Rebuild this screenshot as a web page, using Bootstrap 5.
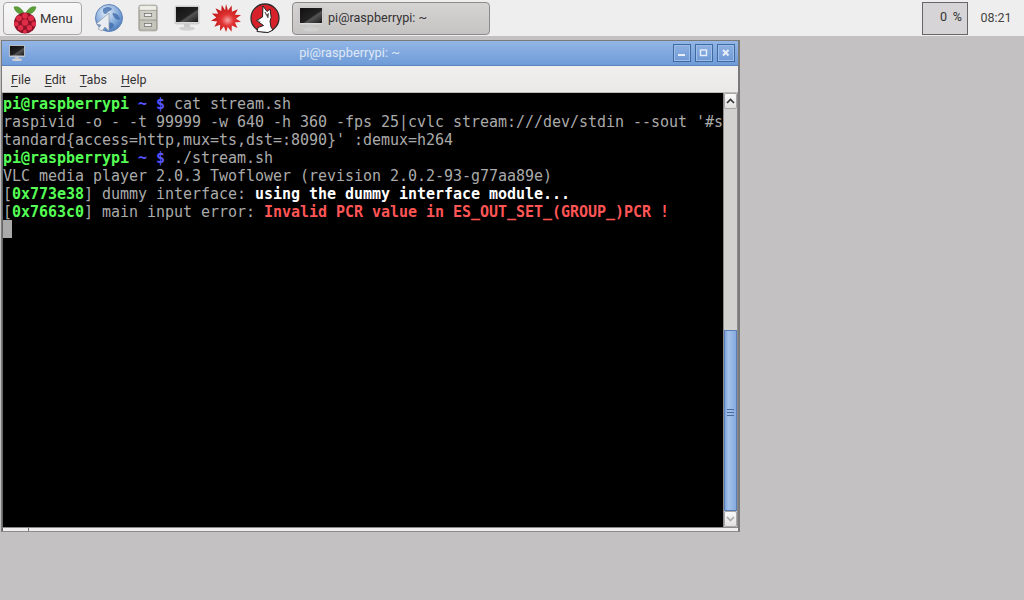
<!DOCTYPE html>
<html lang="en">
<head>
<meta charset="utf-8">
<title>pi@raspberrypi: ~</title>
<link href="https://cdn.jsdelivr.net/npm/bootstrap@5.3.0/dist/css/bootstrap.min.css" rel="stylesheet">
<style>
html,body{height:600px;overflow:hidden}
body{background:#c3c1c1;font-family:Roboto,"Liberation Sans",sans-serif;font-size:12.5px;color:#333}
.panel{height:36px;background:#efeeee;padding:2px 0 0 3px}
.menu-btn{width:79px;height:33px;border:1px solid #a8a5a5;border-radius:4px;background:linear-gradient(#f8f7f7,#eeecec);font-size:13px;color:#333;padding:0 0 0 9px;gap:3px}
.launch{width:39px;height:32px}
.launch-row{margin-left:7px}
.task-btn{width:198px;height:33px;margin-left:8px;border:1px solid #8c8a8a;border-radius:4px;background:linear-gradient(#d6d3d3,#c6c3c3);font-size:12.6px;padding-left:5px;gap:4px;color:#333}
.cpu-box{width:46px;height:33px;border:1px solid #666;background:#d6d4d6;font-size:12.5px;text-align:right;padding:5px 5px 0 0;word-spacing:2px;letter-spacing:.2px;color:#333}
.clock{width:56px;text-align:center;font-size:12.5px;color:#444}
.term-win{width:739px;height:492px;margin:4px 0 0 1px;background:#efecec;border:1px solid #7a7a7a;border-right-width:2px;border-bottom-color:#8a8a8a}
.title-bar{height:25px;background:linear-gradient(#93b6e6,#6f9bd8);border-bottom:1px solid #5d84bd;padding:0 3px 0 6px;color:#dfe8f6;font-size:12.8px}
.title-text{flex:1;text-align:center;padding-left:4px}
.wm-btn{width:18px;height:18px;border:1px solid #3f6a9f;background:linear-gradient(#8db0e2,#6f9ad6);margin-left:4px;box-shadow:inset 0 0 0 1px #9dbce8}
.menu-row{height:27px;background:linear-gradient(#f1eeee,#ebe8e8);padding:2px 0 0 9px;gap:14px;font-size:12.5px;color:#333;border-bottom:1px solid #bdbaba}
.menu-row u{text-underline-offset:2px}
.term-body{height:435px;border-left:1px solid #666}
.term-screen{flex:1;background:#000;color:#aaa;padding:2px 0 0 0;font:15px/18px "DejaVu Sans Mono",monospace;letter-spacing:-.03px;white-space:pre;overflow:hidden}
.t-g{color:#55ff55;font-weight:700}
.t-b{color:#5555ff;font-weight:700}
.t-gn{color:#55ff55;font-weight:700}
.t-w{color:#fff;font-weight:700}
.t-r{color:#ff5555;font-weight:700}
.t-cur{display:block;width:9px;height:18px;margin-top:-1px;background:#aaa}
.sbar{width:15px;background:#d3d0d0;border-left:1px solid #8e8c8c;border-right:1px solid #8e8c8c}
.s-arrow{height:16px;background:linear-gradient(#fbfafa,#e2e0e0);border:1px solid #a9a7a7;border-radius:2px}
.s-space{height:221px}
.s-thumb{flex:1;background:linear-gradient(90deg,#7ea4da,#a5c2ea 30%,#85aade);border:1px solid #5a7fb6;padding-bottom:97px}
.grip{width:7px;height:1px;background:#4b6a9c;box-shadow:0 3px #4b6a9c,0 -3px #4b6a9c}
.foot-row{height:4px;background:#f0eeee;border-top:1px solid #8a8a8a;border-left:1px solid #666}
.foot-cell{width:26px;border-right:1px solid #777}
</style>
</head>
<body>
<div class="panel d-flex align-items-start">
  <button class="menu-btn d-flex align-items-center" type="button">
    <svg width="24" height="30" viewBox="0 0 24 30"><path d="M11 9C8 3 4 2 1 3c1 5 5 8 10 6zM13 9c3-6 7-7 10-6-1 5-5 8-10 6z" fill="#5c9e38" stroke="#3f7a26" stroke-width=".5"/><ellipse cx="12" cy="19" rx="11" ry="10.500" fill="#8c1328"/><g fill="#e02c46"><circle cx="12" cy="11.800" r="2.900"/><circle cx="6" cy="14.300" r="2.900"/><circle cx="18" cy="14.300" r="2.900"/><circle cx="3.300" cy="20" r="2.400"/><circle cx="20.700" cy="20" r="2.400"/><circle cx="12" cy="18.500" r="3.200"/><circle cx="7.600" cy="23.800" r="2.700"/><circle cx="16.400" cy="23.800" r="2.700"/><circle cx="12" cy="27.400" r="1.900"/></g></svg>
    <span>Menu</span>
  </button>
  <div class="launch-row d-flex">
    <div class="launch d-flex justify-content-center align-items-center">
      <svg width="30" height="30" viewBox="0 0 30 30"><defs><radialGradient id="gl" cx=".4" cy=".3" r=".8"><stop offset="0" stop-color="#e6eff9"/><stop offset=".6" stop-color="#7da5d8"/><stop offset="1" stop-color="#3f6fb0"/></radialGradient></defs><circle cx="15" cy="15" r="13.500" fill="url(#gl)" stroke="#5f84b8"/><path d="M9 6c4-3 8-2 9 0-1 2-4 2-5 4s-3 1-4-1zM19 10c3 0 6 2 7 6-2 2-5 0-6-2s-2-3-1-4zM14 20c3-1 5 0 6 2-1 3-3 4-4 4-1-2-3-3-2-6z" fill="#3c6aa8" opacity=".75"/><path d="M15 10v18l-4-4-3 4-4-2 3-4-5-1z" fill="#e9edf2" stroke="#8b97a5" stroke-width=".7"/></svg>
    </div>
    <div class="launch d-flex justify-content-center align-items-center">
      <svg width="22" height="30" viewBox="0 0 24 30"><defs><linearGradient id="cb" x1="0" x2="1"><stop offset="0" stop-color="#b7b7ae"/><stop offset=".5" stop-color="#dadad3"/><stop offset="1" stop-color="#a5a59c"/></linearGradient></defs><rect x="2" y="1" width="20" height="28" rx="2" fill="url(#cb)" stroke="#a3a39a"/><rect x="3" y="2" width="18" height="4" fill="#eeeee9"/><rect x="3" y="7" width="18" height="10" fill="#cfcfc7" stroke="#999990" stroke-width=".6"/><rect x="3" y="18" width="18" height="10" fill="#c5c5bc" stroke="#999990" stroke-width=".6"/><rect x="8" y="10" width="8" height="3.400" fill="#eee" stroke="#6f6f69" stroke-width=".8"/><rect x="8" y="21" width="8" height="3.400" fill="#eee" stroke="#6f6f69" stroke-width=".8"/></svg>
    </div>
    <div class="launch d-flex justify-content-center align-items-center">
      <svg width="26" height="28" viewBox="0 0 26 28"><use href="#mon"/></svg>
    </div>
    <div class="launch d-flex justify-content-center align-items-center">
      <svg width="30" height="30" viewBox="0 0 30 30"><defs><radialGradient id="st" cx=".55" cy=".58" r=".5"><stop offset="0" stop-color="#f7a5a5"/><stop offset=".4" stop-color="#e23434"/><stop offset="1" stop-color="#c01818"/></radialGradient></defs><path d="M15 1l2 6.500 3.600-5 .3 6.300 6-2.600-3 5.500 6.100.3-5.100 3.800 5.300 3-6.300.6 2.600 5.600-5.700-2.500-.2 6.200-3.800-4.800L15 29l-2.100-5.600-3.900 4.500.1-6.100-5.700 2 2.800-5.300-6.200-.7 5.300-3.300L.9 10.400l6.300.4-2.700-5.500 5.700 2.700.6-6 3.300 5.200z" fill="url(#st)"/></svg>
    </div>
    <div class="launch d-flex justify-content-center align-items-center">
      <svg width="30" height="30" viewBox="0 0 30 30"><circle cx="15" cy="15" r="14" fill="#d8222b" stroke="#2c2c2c" stroke-width="1.300"/><path d="M7 28.500l1-4 5.500-2-7-5 6-3.500L13 3l4 5.500L20 6l1.200 8.500L20 18l1 6 2 3-5 2.500z" fill="#fff" stroke="#222" stroke-width="1"/><path d="M15 9l1.500 3 2-1.500-.5 4.500zM7.500 17.500l3 1" fill="#555" stroke="#444" stroke-width=".7"/></svg>
    </div>
  </div>
  <div class="task-btn d-flex align-items-center">
    <svg width="26" height="28" viewBox="0 0 26 28"><use href="#mon"/></svg>
    <span>pi@raspberrypi: ~</span>
  </div>
  <div class="ms-auto d-flex align-items-center">
    <div class="cpu-box">0 %</div>
    <div class="clock">08:21</div>
  </div>
</div>

<div class="term-win d-flex flex-column">
  <div class="title-bar d-flex align-items-center">
    <svg width="18" height="18" viewBox="0 0 26 28"><use href="#mon"/></svg>
    <span class="title-text">pi@raspberrypi: ~</span>
    <span class="wm-btn d-flex justify-content-center align-items-center"><svg width="10" height="10" viewBox="0 0 10 10"><rect x="1" y="6" width="7" height="2" fill="#e8eef8"/></svg></span>
    <span class="wm-btn d-flex justify-content-center align-items-center"><svg width="10" height="10" viewBox="0 0 10 10"><rect x="1.500" y="2" width="6" height="5.500" fill="none" stroke="#e8eef8" stroke-width="1.400"/></svg></span>
    <span class="wm-btn d-flex justify-content-center align-items-center"><svg width="10" height="10" viewBox="0 0 10 10"><path d="M2 2l5.500 5.500M7.500 2L2 7.500" stroke="#e8eef8" stroke-width="2"/></svg></span>
  </div>
  <div class="menu-row d-flex align-items-center">
    <span><u>F</u>ile</span><span><u>E</u>dit</span><span><u>T</u>abs</span><span><u>H</u>elp</span>
  </div>
  <div class="term-body d-flex">
    <div class="term-screen"><span class="t-g">pi@raspberrypi</span> <span class="t-b">~ $</span> cat stream.sh
raspivid -o - -t 99999 -w 640 -h 360 -fps 25|cvlc stream:///dev/stdin --sout '#s
tandard{access=http,mux=ts,dst=:8090}' :demux=h264
<span class="t-g">pi@raspberrypi</span> <span class="t-b">~ $</span> ./stream.sh
VLC media player 2.0.3 Twoflower (revision 2.0.2-93-g77aa89e)
[<span class="t-gn">0x773e38</span>] dummy interface: <span class="t-w">using the dummy interface module...</span>
[<span class="t-gn">0x7663c0</span>] main input error: <span class="t-r">Invalid PCR value in ES_OUT_SET_(GROUP_)PCR !</span>
<span class="t-cur"></span></div>
    <div class="sbar d-flex flex-column">
      <div class="s-arrow d-flex justify-content-center align-items-center"><svg width="9" height="6" viewBox="0 0 9 6"><path d="M1 5l3.500-3.500L8 5" fill="none" stroke="#333" stroke-width="1.600"/></svg></div>
      <div class="s-space"></div>
      <div class="s-thumb d-flex justify-content-center align-items-end"><div class="grip"></div></div>
      <div class="s-arrow d-flex justify-content-center align-items-center"><svg width="9" height="6" viewBox="0 0 9 6"><path d="M1 1l3.500 3.500L8 1" fill="none" stroke="#aaa" stroke-width="1.600"/></svg></div>
    </div>
  </div>
  <div class="foot-row d-flex"><div class="foot-cell"></div></div>
</div>

<svg width="0" height="0" class="d-block">
  <defs>
    <linearGradient id="scr" x1="0" y1="0" x2="1" y2="1"><stop offset="0" stop-color="#111"/><stop offset=".55" stop-color="#222"/><stop offset=".62" stop-color="#555"/><stop offset="1" stop-color="#1a1a1a"/></linearGradient>
    <g id="mon"><rect x="1" y="2" width="24" height="18" rx="1" fill="#d9d9d9" stroke="#bbb" stroke-width=".6"/><rect x="2" y="3" width="22" height="15" fill="url(#scr)"/><rect x="10" y="20" width="6" height="3" fill="#c8c8c8"/><ellipse cx="13" cy="24.500" rx="8" ry="2" fill="#d0d0d0"/></g>
  </defs>
</svg>
</body>
</html>
